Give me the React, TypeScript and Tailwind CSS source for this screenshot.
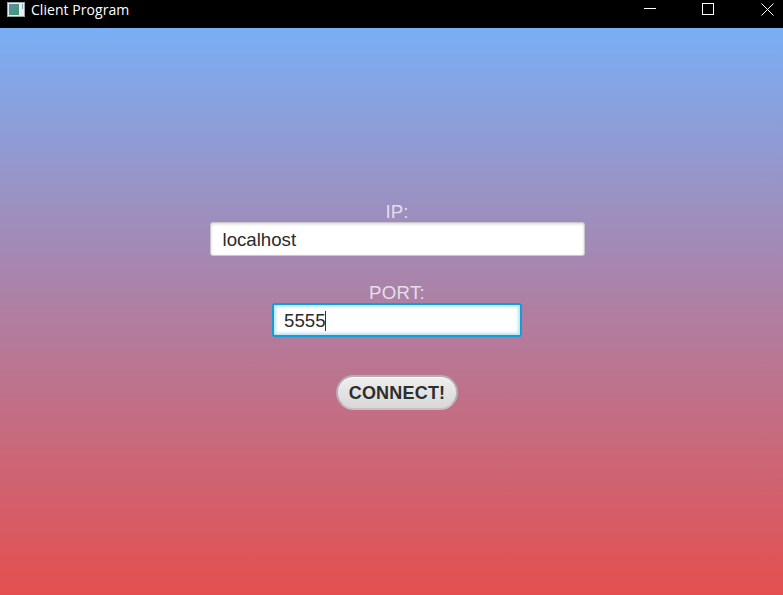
import { useState } from "react";

function AppIcon() {
  return (
    <svg width="18" height="15" viewBox="0 0 18 15" className="shrink-0">
      <defs>
        <linearGradient id="screen" x1="0" y1="0" x2="1" y2="1">
          <stop offset="0" stopColor="#5d8fa8" />
          <stop offset="1" stopColor="#3f9a6c" />
        </linearGradient>
      </defs>
      <rect x="0.5" y="0.5" width="17" height="14" fill="#e8eef2" stroke="#9aa3a8" />
      <rect x="2" y="2" width="10" height="11" fill="url(#screen)" />
      <rect x="15" y="2" width="1" height="5" fill="#8fa3ad" />
    </svg>
  );
}

export default function App() {
  const [ip, setIp] = useState("localhost");
  const [port] = useState("5555");

  return (
    <div className="flex h-[595px] w-[783px] flex-col overflow-hidden font-['Liberation_Sans',sans-serif]">
      {/* Title bar */}
      <div className="flex h-[28px] items-start bg-black pt-[2px] pl-[7px] text-white">
        <AppIcon />
        <span className="mt-[1px] ml-[6px] font-['Open_Sans',sans-serif] text-[14px] leading-[14px] tracking-[0.05px]">
          Client Program
        </span>
        <div className="ml-auto flex items-start pt-[1px]">
          <svg width="12" height="12" viewBox="0 0 12 12" className="mr-[46px]">
            <path d="M0 5.5H12" stroke="#fff" strokeWidth="1" />
          </svg>
          <svg width="12" height="12" viewBox="0 0 12 12" className="mr-[47px]">
            <rect x="0.5" y="0.5" width="11" height="11" fill="none" stroke="#fff" />
          </svg>
          <svg width="13" height="13" viewBox="0 0 13 13" className="mr-[9px]">
            <path d="M0.5 0.5L12.5 12.5M12.5 0.5L0.5 12.5" stroke="#fff" strokeWidth="1" />
          </svg>
        </div>
      </div>

      {/* Form */}
      <div className="flex flex-1 flex-col items-center bg-[linear-gradient(to_bottom,#7aaef5,#e54f4f)] pt-[174px] pl-[11px] text-[18.67px] leading-[20px]">
        <label className="text-[#e3dfe8]">IP:</label>
        <input
          value={ip}
          onChange={(e) => setIp(e.target.value)}
          className="h-[34px] w-[375px] rounded-[3px] border border-[#c8c8c8] bg-white pt-[1px] pr-[11px] pl-[12px] text-[18.67px] text-[#2b2b2b] shadow-[inset_0_1px_3px_rgba(0,0,0,0.18)] outline-none"
        />
        <label className="mt-[27px] tracking-[0.3px] text-[#e3dfe8]">PORT:</label>
        <div className="flex h-[34px] w-[250px] items-center rounded-[3px] border-2 border-[#0f9fd8] bg-white px-[10px] pt-[1px] text-[#2b2b2b] shadow-[inset_0_0_3px_2px_rgba(170,220,240,0.8)]">
          <span>{port}</span>
          <span className="-ml-[1px] h-[20px] w-px bg-[#333]" />
        </div>
        <button className="mt-[38px] h-[35px] w-[122px] rounded-full border-2 border-[#b4b0b4] border-b-[#c9bcc4] bg-[linear-gradient(to_bottom,#eeeeee,#d8d8d8)] text-[18px] font-bold tracking-[0.2px] text-[#2e2e2e] shadow-[inset_0_1px_1px_rgba(255,255,255,0.8)]">
          CONNECT!
        </button>
      </div>
    </div>
  );
}
